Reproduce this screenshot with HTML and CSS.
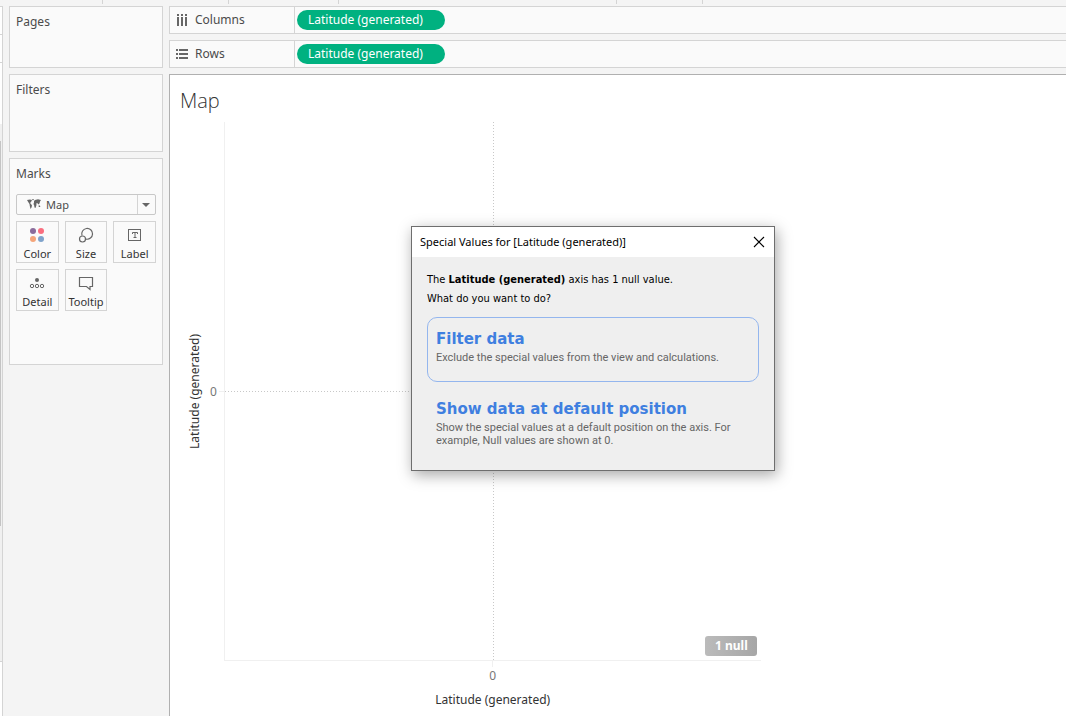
FILE: index.html
```
<!doctype html>
<html lang="en">
<head>
<meta charset="utf-8">
<title>Map</title>
<link rel="stylesheet" href="styles.css">
</head>
<body>
<header class="toolbar">
	<span class="seg seg-a"></span>
	<span class="seg seg-b"></span>
	<span class="seg seg-c"></span>
	<span class="seg seg-d"></span>
	<span class="seg seg-e"></span>
</header>
<div class="workspace">
	<div class="strip">
		<div class="strip-row"></div>
		<div class="strip-row"></div>
		<div class="strip-list"></div>
		<div class="strip-scroll"><div class="thumb"></div></div>
	</div>
	<aside class="cards">
		<section class="card pages"><h2>Pages</h2></section>
		<section class="card filters"><h2>Filters</h2></section>
		<section class="card marks">
			<h2 id="marks-title">Marks</h2>
			<div class="mark-type">
				<select aria-labelledby="marks-title">
					<option>Map</option>
				</select>
				<svg class="map-icon" width="14" height="11" viewBox="0 0 14 11">
					<path fill="#666" d="M0 1l3-.5 2 .5-1 2-1 1 1 1 1 1.500-.5 2-1 1.500-.7-3L2.500 5 1.500 3.500zM5 0h2L6 1.500zM7 2l1-1 3-.7 3 .7-1 1.500-.5 2-1.200 1-1-1.500-1 .5L9.500 6l-1 3-1-.5-.3-2L6.500 5 7 3.500zM11.500 6.500l1.500 0 .3 1.500-1.500 0z"/>
				</svg>
				<span class="arrow"></span>
			</div>
			<div class="mark-buttons">
				<button>
					<svg width="20" height="20" viewBox="0 0 20 20">
						<circle cx="6" cy="6" r="3" fill="#8a6c9b"/>
						<circle cx="14" cy="6" r="3" fill="#fa6e7f"/>
						<circle cx="6" cy="14" r="3" fill="#f5a57a"/>
						<circle cx="14" cy="14" r="3" fill="#7fa3cb"/>
					</svg>
					Color
				</button>
				<button>
					<svg width="20" height="20" viewBox="0 0 20 20" fill="none" stroke="#666" stroke-width="1.200">
						<path d="M6 10.500a5.400 5.400 0 1 1 4 3.600"/>
						<circle cx="6.500" cy="14" r="3"/>
					</svg>
					Size
				</button>
				<button>
					<svg width="20" height="20" viewBox="0 0 20 20" fill="none" stroke="#666">
						<rect x="3.500" y="4.500" width="12" height="11"/>
						<path d="M7.500 9V7.500h5V9M10 7.500v5M8.500 12.500h3"/>
					</svg>
					Label
				</button>
				<button>
					<svg width="20" height="20" viewBox="0 0 20 20" fill="none" stroke="#666">
						<circle cx="10" cy="7" r="2" fill="#666" stroke="none"/>
						<circle cx="5" cy="13" r="1.700"/>
						<circle cx="10" cy="13" r="1.700"/>
						<circle cx="15" cy="13" r="1.700"/>
					</svg>
					Detail
				</button>
				<button>
					<svg width="20" height="20" viewBox="0 0 20 20" fill="none" stroke="#666" stroke-width="1.200">
						<path d="M3.500 4.500h13v9h-2.500v3l-3.500-3h-7z"/>
					</svg>
					Tooltip
				</button>
			</div>
		</section>
	</aside>
	<main>
		<div class="shelf">
			<div class="shelf-name">
				<svg width="12" height="12" viewBox="0 0 12 12" fill="#666">
					<path d="M1 0h2v2H1zM5 0h2v2H5zM9 0h2v2H9zM1 3h2v9H1zM5 3h2v9H5zM9 3h2v9H9z"/>
				</svg>
				Columns
			</div>
			<button class="pill">Latitude (generated)</button>
		</div>
		<div class="shelf">
			<div class="shelf-name">
				<svg width="12" height="12" viewBox="0 0 12 12" fill="#666">
					<path d="M0 1h2v2H0zM0 5h2v2H0zM0 9h2v2H0zM3 1h9v2H3zM3 5h9v2H3zM3 9h9v2H3z"/>
				</svg>
				Rows
			</div>
			<button class="pill">Latitude (generated)</button>
		</div>
		<section class="sheet">
			<h1>Map</h1>
			<div class="chart">
				<div class="y-title"><span>Latitude (generated)</span></div>
				<div class="y-axis"><span>0</span><i></i></div>
				<div class="plot">
					<div class="line-h"></div>
					<div class="line-v"></div>
					<button class="null-badge">1 null</button>
				</div>
				<div class="x-axis"><i></i><span>0</span></div>
				<div class="x-title">Latitude (generated)</div>
			</div>
		</section>
	</main>
</div>
<div class="dialog" role="dialog" aria-labelledby="dialog-title">
	<div class="dialog-bar">
		<span id="dialog-title">Special Values for [Latitude (generated)]</span>
		<button class="close" aria-label="Close">
			<svg width="12" height="12" viewBox="0 0 12 12" stroke="#000" stroke-width="1.100">
				<path d="M1 1l10 10M11 1L1 11"/>
			</svg>
		</button>
	</div>
	<div class="dialog-body">
		<p>The <b>Latitude (generated)</b> axis has 1 null value.</p>
		<p>What do you want to do?</p>
		<button class="choice selected">
			<strong>Filter data</strong>
			<span>Exclude the special values from the view and calculations.</span>
		</button>
		<button class="choice">
			<strong>Show data at default position</strong>
			<span>Show the special values at a default position on the axis. For example, Null values are shown at 0.</span>
		</button>
	</div>
</div>
</body>
</html>
```
FILE: styles.css
```
* {
	box-sizing: border-box;
}
body {
	margin: 0;
	min-height: 100vh;
	display: flex;
	flex-direction: column;
	background: #f4f4f4;
	color: #4b4b4b;
	font: 12px/18px "Noto Sans", "Open Sans", sans-serif;
}
button {
	font: inherit;
	color: inherit;
	cursor: pointer;
}
h1, h2, p {
	margin: 0;
	font-weight: 400;
}

/* toolbar separators */
.toolbar {
	display: flex;
	height: 6px;
}
.seg {
	height: 4px;
	border-right: 1px solid #d4d4d4;
}
.seg-a { width: 103px; }
.seg-b { width: 126px; }
.seg-c { width: 110px; }
.seg-d { width: 278px; }
.seg-e { width: 86px; }

.workspace {
	flex: 1;
	display: flex;
}

/* edge of the data pane */
.strip {
	width: 3px;
	display: flex;
	flex-direction: column;
	background: #fff;
	border-top: 1px solid #d4d4d4;
	border-right: 1px solid #d4d4d4;
}
.strip-row {
	height: 28px;
	border-bottom: 1px solid #d4d4d4;
}
.strip-list {
	height: 61px;
}
.strip-scroll {
	flex: 1;
	margin-bottom: 54px;
	padding-top: 17px;
	background: #f0f0f0;
	border-bottom: 1px solid #d4d4d4;
}
.thumb {
	width: 1px;
	height: 74%;
	background: #c4c4c4;
}

.cards {
	width: 166px;
	padding: 0 6px;
	display: flex;
	flex-direction: column;
	gap: 6px;
}
.card {
	padding: 6px;
	background: #fafafa;
	border: 1px solid #d4d4d4;
}
.card h2 {
	font-size: 12px;
}
.pages { height: 62px; }
.filters { height: 78px; }
.marks { min-height: 207px; }

.mark-type {
	position: relative;
	margin: 11px 0 6px;
}
.mark-type select {
	display: block;
	width: 100%;
	height: 21px;
	padding: 0 0 0 29px;
	appearance: none;
	background: #fafafa;
	border: 1px solid #c8c8c8;
	border-radius: 2px;
	font: inherit;
	font-size: 11px;
	color: #4b4b4b;
}
.map-icon {
	position: absolute;
	left: 11px;
	top: 5px;
}
.arrow {
	position: absolute;
	right: 1px;
	top: 1px;
	width: 18px;
	height: 19px;
	border-left: 1px solid #d4d4d4;
	pointer-events: none;
}
.arrow::after {
	content: "";
	position: absolute;
	left: 4px;
	top: 8px;
	border: 4px solid transparent;
	border-top-color: #666;
	border-bottom: 0;
}
.mark-buttons {
	display: grid;
	grid-template-columns: repeat(3, 1fr);
	gap: 6px;
}
.mark-buttons button {
	height: 42px;
	min-width: 0;
	padding: 3px 0 0;
	display: flex;
	flex-direction: column;
	align-items: center;
	background: #fafafa;
	border: 1px solid #d4d4d4;
	font-size: 11px;
	line-height: 18px;
	color: #333;
}
.mark-buttons svg {
	flex: none;
}

main {
	flex: 1;
	display: flex;
	flex-direction: column;
	gap: 6px;
}
.shelf {
	height: 28px;
	display: flex;
	align-items: center;
	gap: 2px;
	background: #fafafa;
	border: 1px solid #d4d4d4;
	border-right: 0;
}
.shelf-name {
	width: 125px;
	height: 100%;
	padding-left: 6px;
	display: flex;
	align-items: center;
	gap: 7px;
	border-right: 1px solid #d4d4d4;
}
.pill {
	width: 148px;
	height: 20px;
	padding: 0 0 0 11px;
	border: 0;
	border-radius: 10px;
	background: #00b180;
	color: #fff;
	text-align: left;
	line-height: 20px;
}

.sheet {
	flex: 1;
	display: flex;
	flex-direction: column;
	background: #fff;
	border: solid #b0b0b0;
	border-width: 1px 0 0 1px;
}
.sheet h1 {
	padding: 11px 10px 6px;
	font: 300 20px/30px "Open Sans", "Noto Sans", sans-serif;
	color: #333;
}
.chart {
	flex: 1;
	margin-right: 34%;
	display: grid;
	grid-template-columns: 36px 18px 1fr;
	grid-template-rows: 1fr 27px 28px;
	color: #333;
}
.y-title {
	padding-left: 14px;
	display: flex;
	align-items: center;
	justify-content: center;
}
.y-title span {
	writing-mode: vertical-rl;
	transform: rotate(180deg);
}
.y-axis {
	display: flex;
	align-items: center;
	justify-content: space-between;
	padding-left: 4px;
	color: #777;
}
.y-axis i {
	width: 5px;
	border-top: 1px solid #f0f0f0;
}
.plot {
	position: relative;
	border: solid #f0f0f0;
	border-width: 0 0 1px 1px;
}
.line-h, .line-v {
	position: absolute;
}
.line-h {
	left: 0;
	right: 0;
	top: 50%;
	height: 1px;
	background: repeating-linear-gradient(90deg, #c8c8c8 0 1px, transparent 1px 3px);
}
.line-v {
	top: 0;
	bottom: 0;
	left: 50%;
	width: 1px;
	background: repeating-linear-gradient(#c8c8c8 0 1px, transparent 1px 3px);
}
.null-badge {
	position: absolute;
	right: 4px;
	bottom: 4px;
	width: 52px;
	height: 20px;
	padding: 0;
	border: 0;
	border-radius: 3px;
	background: linear-gradient(90deg, #bbb, #a6a6a6);
	color: #fff;
	font-size: 12px;
	font-weight: 700;
	line-height: 20px;
}
.x-axis, .x-title {
	grid-column: 3;
	text-align: center;
}
.x-axis {
	display: flex;
	flex-direction: column;
	align-items: center;
	color: #777;
}
.x-axis i {
	height: 6px;
	border-left: 1px solid #f0f0f0;
}
.x-title {
	line-height: 24px;
}

.dialog {
	position: absolute;
	left: 411px;
	top: 226px;
	width: 364px;
	border: 1px solid #6e6e6e;
	background: #efefef;
	box-shadow: 2px 4px 14px rgba(0, 0, 0, .35);
	color: #000;
	font: 11px/19px "DejaVu Sans Condensed", "DejaVu Sans", sans-serif;
}
.dialog-bar {
	height: 30px;
	padding: 0 9px 0 8px;
	display: flex;
	align-items: center;
	justify-content: space-between;
	background: #fff;
	font: 11px/18px "Noto Sans", "Open Sans", sans-serif;
}
.close {
	width: 12px;
	height: 12px;
	padding: 0;
	border: 0;
	background: none;
}
.close svg {
	display: block;
}
.dialog-body {
	padding: 13px 15px 12px;
}
.choice {
	width: 100%;
	margin-top: 5px;
	padding: 11px 8px 10px;
	display: flex;
	flex-direction: column;
	gap: 2px;
	border: 1px solid transparent;
	border-radius: 10px;
	background: none;
	text-align: left;
	color: #666;
	font: 11px/13px Roboto, "Liberation Sans", sans-serif;
}
.choice.selected {
	height: 65px;
	margin-top: 9px;
	border-color: #94b6ee;
}
.choice strong {
	font: 700 15px/20px "DejaVu Sans", sans-serif;
	color: #3f7fe0;
}
```
